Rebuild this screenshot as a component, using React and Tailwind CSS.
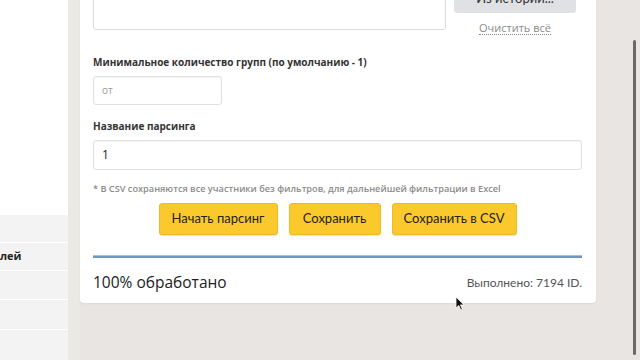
import React from 'react';

const font = { fontFamily: '"Open Sans", "DejaVu Sans", sans-serif' };
const lato = { fontFamily: 'Lato, "Open Sans", sans-serif' };

const Sidebar = () => (
    <div className="w-[68px] shrink-0 flex flex-col bg-white">
        <div className="h-[215px] bg-white" />
        <div className="h-[28px] bg-[#f3f3f3] border-b border-white" />
        <div className="h-[28px] bg-[#f3f3f3] border-b border-white flex items-center text-[11px] font-bold text-[#222]">лей</div>
        <div className="h-[29px] bg-[#f3f3f3] border-b border-white" />
        <div className="h-[30px] bg-[#f3f3f3] border-b border-white" />
        <div className="flex-1 bg-[#f3f3f3]" />
    </div>
);

const YellowButton = ({ children, width }) => (
    <button
        className={`h-[32px] ${width} rounded-[3px] bg-[#fcc92d] border border-[#efbb22] text-[13px] text-[#222] shadow-[0_1px_1px_rgba(0,0,0,0.12)]`}
        style={lato}
    >
        {children}
    </button>
);

const App = () => {
    return (
        <div className="relative w-[640px] h-[360px] overflow-hidden bg-[#e8e5e2] flex" style={font}>
            <Sidebar />
            <div className="w-[12px] shrink-0 bg-[#ebe9e6]" />

            {/* main card */}
            <div className="w-[516px] shrink-0 self-start -mt-[60px] bg-white rounded-b-[4px] pl-[13px] pr-[14px] pt-[13px] pb-[9px] shadow-[0_1px_2px_rgba(0,0,0,0.06)]">
                <div className="flex h-[77px] items-start">
                    <div className="w-[353px] h-[77px] border border-[#dcdcdc] rounded-[3px] bg-white" />
                    <div className="ml-[8px] w-[122px] h-[77px] flex flex-col items-center">
                        <div className="w-[122px] h-[28px] shrink-0 mt-[32px] rounded-[3px] bg-[#dfe1e4] flex items-center justify-center text-[13px] text-[#333]" style={lato}>
                            Из истории...
                        </div>
                        <span className="mt-[8px] shrink-0 text-[11px] text-[#8a8a8a] border-b border-dotted border-[#8a8a8a] leading-[13px]">Очистить всё</span>
                    </div>
                </div>

                <div className="mt-[25px] text-[10px] font-bold text-[#333] leading-[14px]">Минимальное количество групп (по умолчанию - 1)</div>
                <div className="mt-[7px] w-[129px] h-[29px] border border-[#e0e0e0] rounded-[3px] flex items-center px-[8px] text-[10px] text-[#9a9a9a] shadow-[inset_0_1px_1px_rgba(0,0,0,0.04)]">от</div>

                <div className="mt-[14px] text-[10px] font-bold text-[#333] leading-[14px]">Название парсинга</div>
                <div className="mt-[7px] w-[489px] h-[30px] border border-[#e0e0e0] rounded-[3px] flex items-center px-[8px] text-[12px] text-[#222] shadow-[inset_0_1px_1px_rgba(0,0,0,0.04)]">1</div>

                <div className="mt-[12px] text-[9.2px] font-semibold text-[#8c8c8c] leading-[14px]">* В CSV сохраняются все участники без фильтров, для дальнейшей фильтрации в Excel</div>

                <div className="mt-[7px] flex justify-center gap-[11px]">
                    <YellowButton width="w-[119px]">Начать парсинг</YellowButton>
                    <YellowButton width="w-[92px]">Сохранить</YellowButton>
                    <YellowButton width="w-[125px]">Сохранить в CSV</YellowButton>
                </div>

                <div className="mt-[20px] h-[3px] bg-[#6f95c4] border-t border-[#a9c0dd]" />

                <div className="mt-[13px] flex items-center justify-between">
                    <span className="text-[15.5px] text-[#222]">100% обработано</span>
                    <span className="text-[12px] text-[#555]" style={lato}>Выполнено: 7194 ID.</span>
                </div>
            </div>

            <div className="flex-1 flex justify-end pr-[4px]">
                <div className="mt-[40px] w-[3px] h-[315px] rounded-full bg-[#6b6866]" />
            </div>

            {/* mouse cursor */}
            <svg className="absolute left-[455px] top-[296px]" width="10" height="15" viewBox="0 0 10 15">
                <path d="M1 1 L1 12 L3.8 9.5 L5.8 14 L7.4 13.3 L5.5 8.9 L9 8.9 Z" fill="#111" stroke="#fff" strokeWidth="0.8" />
            </svg>
        </div>
    );
};

export default App;
